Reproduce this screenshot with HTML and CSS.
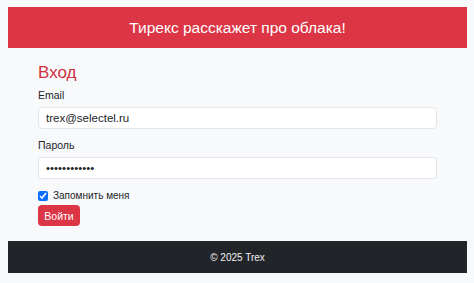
FILE: index.html
```html
<!DOCTYPE html>
<html lang="ru">
<head>
<meta charset="utf-8">
<title>Тирекс</title>
<link rel="stylesheet" href="styles.css">
</head>
<body>
<header class="hero">Тирекс расскажет про облака!</header>
<main class="container">
  <h1 class="title">Вход</h1>
  <form class="form">
    <div class="field">
      <label class="label" for="email">Email</label>
      <input class="input" id="email" type="email" value="trex@selectel.ru">
    </div>
    <div class="field">
      <label class="label" for="pass">Пароль</label>
      <input class="input" id="pass" type="password" value="supersecret1">
    </div>
    <label class="check">
      <input class="check-box" type="checkbox" checked>
      <span>Запомнить меня</span>
    </label>
    <button class="btn" type="button">Войти</button>
  </form>
</main>
<footer class="footer">© 2025 Trex</footer>
</body>
</html>
```
FILE: styles.css
```css
* { box-sizing: border-box; }
html, body { background: #f8f9fa; }
body {
  margin: 7px 7px 8px 8px;
  font-family: "Liberation Sans", Arial, sans-serif;
  color: #212529;
}
.hero {
  background: #dc3545;
  color: #fff;
  font-size: 15.5px;
  height: 41px;
  display: flex;
  align-items: center;
  justify-content: center;
}
.container {
  width: 399px;
  margin: 0 auto;
  padding: 15px 0 15px;
}
.title {
  margin: 0 0 5px;
  font-size: 17px;
  font-weight: 400;
  line-height: 20px;
  color: #d0303f;
}
.form { display: flex; flex-direction: column; }
.field { display: flex; flex-direction: column; margin-bottom: 9px; }
.label {
  font-size: 10.5px;
  line-height: 14px;
  margin-bottom: 5px;
}
.input {
  height: 22px;
  border: 1px solid #e3e6ea;
  border-radius: 4px;
  background: #fff;
  padding: 0 7px;
  font-family: inherit;
  font-size: 11.5px;
  color: #212529;
}
.check {
  display: flex;
  align-items: center;
  gap: 5px;
  font-size: 10px;
  line-height: 14px;
  margin-top: 1px;
}
.check-box {
  margin: 0;
  width: 10px;
  height: 10px;
  accent-color: #0d6efd;
}
.btn {
  align-self: flex-start;
  margin-top: 2px;
  height: 21px;
  width: 42px;
  padding: 0;
  border: none;
  border-radius: 4px;
  background: #dc3545;
  color: #fff;
  font-family: inherit;
  font-size: 10.5px;
}
.footer {
  background: #212529;
  color: #f1f1f1;
  height: 32px;
  display: flex;
  align-items: center;
  justify-content: center;
  font-size: 10px;
}
```
